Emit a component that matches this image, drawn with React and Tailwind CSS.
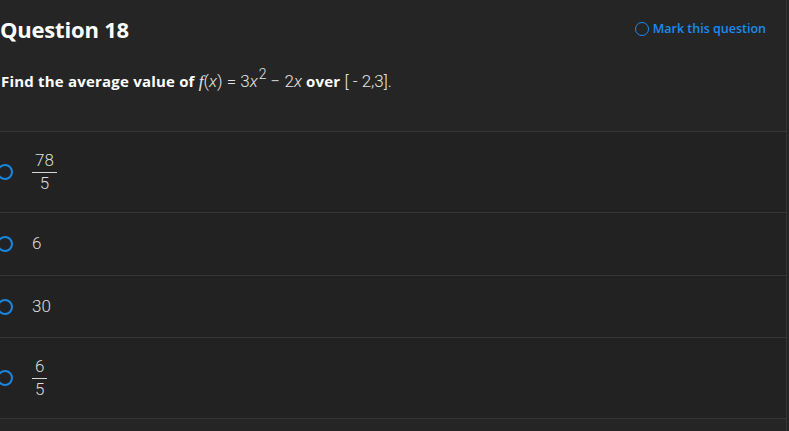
import React from "react";

const options = [
  { kind: "frac", num: "78", den: "5", h: "h-[81px]" },
  { kind: "num", value: "6", h: "h-[63px]" },
  { kind: "num", value: "30", h: "h-[62px]" },
  { kind: "frac", num: "6", den: "5", h: "h-[81px]" },
];

const Radio = () => (
  <span className="block w-[16px] h-[16px] rounded-full border-2 border-[#1a86e0] ml-[-3px] shrink-0" />
);

const Fraction = ({ num, den }) => (
  <span className="inline-flex flex-col items-center leading-none pb-[4px]">
    <span className="px-[3px] pb-[3px]">{num}</span>
    <span className="block w-full h-px bg-[#d6d6d6]" />
    <span className="px-[3px] pt-[2px]">{den}</span>
  </span>
);

const App = () => {
  return (
    <div className="w-[789px] h-[431px] bg-[#252525] overflow-hidden font-['Open_Sans',sans-serif]">
      <div className="w-[787px] h-full border-r border-[#343434]">
        {/* header */}
        <div className="flex items-center justify-between pt-[15px] h-[43px] pr-[20px]">
          <h1 className="text-[22px] font-bold text-white leading-[28px] tracking-[-0.2px]">
            Question 18
          </h1>
          <button className="flex items-center gap-[4px] text-[#1a8cf0] text-[12.5px] font-semibold">
            <span className="block w-[14px] h-[14px] rounded-full border-[1.5px] border-[#1a8cf0]" />
            Mark this question
          </button>
        </div>

        {/* prompt */}
        <p className="mt-[26px] h-[62px] text-[15px] font-bold text-white leading-[24px] pl-[1px] tracking-[0.2px]">
          Find the average value of{" "}
          <span className="font-['Roboto',sans-serif] font-light text-[17px] text-[#e4e4e4] tracking-normal">
            <span className="font-['Liberation_Serif',serif] italic">f</span>(
            <span className="italic">x</span>) = 3<span className="italic">x</span>
            <span className="inline-block text-[14px] relative top-[-8px] ml-px">2</span> − 2
            <span className="italic">x</span>
          </span>{" "}
          over{" "}
          <span className="font-['Roboto',sans-serif] font-light text-[17px] text-[#e4e4e4] tracking-normal">
            [ - 2,3].
          </span>
        </p>

        {/* answers */}
        <div className="bg-[#222222] border-t border-[#363636]">
          {options.map((o, i) => (
            <div
              key={i}
              className={`${o.h} flex items-center border-b border-[#363636] gap-[19px]`}
            >
              <Radio />
              <span className="font-['Roboto',sans-serif] font-light text-[17px] text-[#dedede]">
                {o.kind === "frac" ? (
                  <Fraction num={o.num} den={o.den} />
                ) : (
                  o.value
                )}
              </span>
            </div>
          ))}
        </div>
      </div>
    </div>
  );
};

export default App;
